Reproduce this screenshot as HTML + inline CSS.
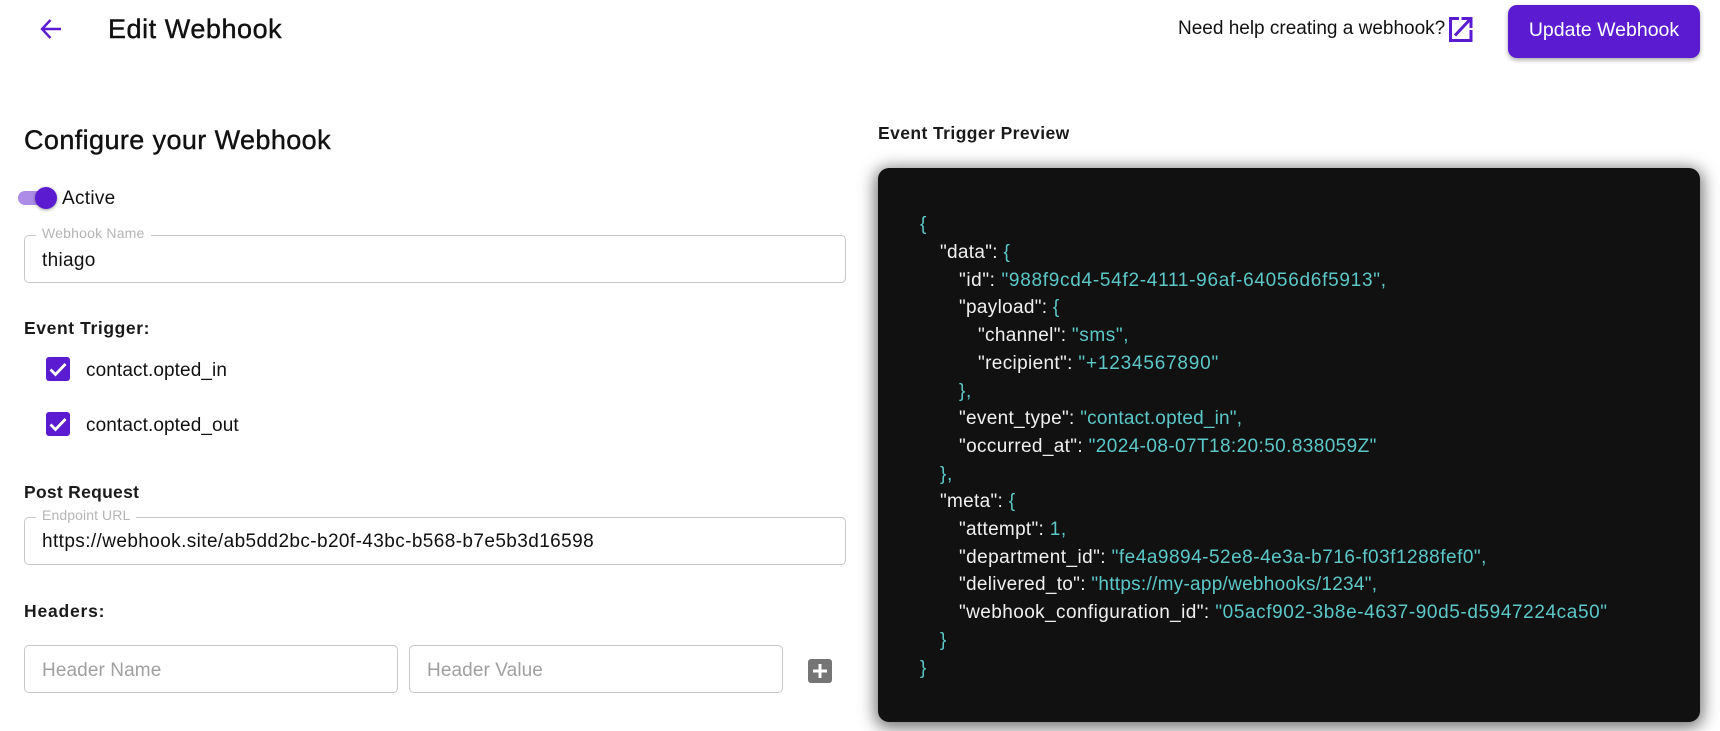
<!DOCTYPE html>
<html><head><meta charset="utf-8"><style>
html,body{margin:0;padding:0;background:#fff}
body{width:1720px;height:731px;position:relative;overflow:hidden;font-family:"Liberation Sans",sans-serif;color:#111}
.t{position:absolute;white-space:nowrap}
.box{position:absolute;border:1.5px solid #c8c8c8;border-radius:5px;box-sizing:border-box;background:#fff}
.leg{position:absolute;background:#fff;padding:0 6px;color:#b5b5b5;font-size:14px;white-space:nowrap;line-height:14px}
.ph{color:#a0a0a0;font-size:19px;letter-spacing:.1px}
.b{font-weight:bold;font-size:17.5px;color:#1a1a1a}
.card{position:absolute;left:878px;top:168px;width:822px;height:554px;background:#111;border-radius:11px;box-shadow:0 3px 16px 3px rgba(0,0,0,.55)}
.c{position:absolute;left:0;white-space:pre;font-size:19px;line-height:20px;color:#f0f0f0;letter-spacing:.3px}
.c i{font-style:normal;color:#5cc8c8;letter-spacing:.6px}
.cb{position:absolute;left:46px;width:24px;height:24px;background:#5a1bd1;border-radius:3px}
</style></head><body>
<svg style="position:absolute;left:38px;top:17px" width="26" height="24" viewBox="0 0 26 24" fill="none" stroke="#5a1bd1" stroke-width="2.4"><path d="M23 12H5M12.500 3L4 12l8.500 9"/></svg>
<div class="t" style="left:108px;top:13px;font-size:27px;letter-spacing:.55px;line-height:32px;-webkit-text-stroke:.4px #111">Edit Webhook</div>
<div class="t" style="left:1178px;top:17px;font-size:19px;line-height:24px">Need help creating a webhook?</div>
<svg style="position:absolute;left:1447px;top:15px" width="26" height="28" viewBox="0 0 26 28" fill="none" stroke="#5a1bd1" stroke-width="3"><path d="M12 3.500H3.500v22H24V15M8 20.500L22.500 5M14.500 3.500H24V13"/></svg>
<div style="position:absolute;left:1508px;top:5px;width:192px;height:53px;background:#5a1bd1;border-radius:9px;box-shadow:0 2px 5px rgba(0,0,0,.35);color:#fff;font-size:19.500px;line-height:51px;text-align:center">Update Webhook</div>

<div class="t" style="left:24px;top:123px;font-size:27px;letter-spacing:.4px;line-height:34px;-webkit-text-stroke:.4px #111">Configure your Webhook</div>
<div style="position:absolute;left:18px;top:191px;width:36px;height:14px;border-radius:7px;background:#ad8ce8"></div>
<div style="position:absolute;left:35px;top:187px;width:22px;height:22px;border-radius:50%;background:#5a1bd1;box-shadow:0 1px 3px rgba(0,0,0,.4)"></div>
<div class="t" style="left:62px;top:187px;font-size:19px;letter-spacing:.3px;line-height:24px">Active</div>

<div class="box" style="left:24px;top:235px;width:822px;height:48px"></div>
<div class="leg" style="left:36px;top:226px;letter-spacing:.2px">Webhook Name</div>
<div class="t" style="left:42px;top:249px;font-size:19px;letter-spacing:.3px;line-height:24px">thiago</div>

<div class="t b" style="left:24px;top:317px;line-height:22px;letter-spacing:.6px">Event Trigger:</div>
<div class="cb" style="top:357px"><svg width="24" height="24" viewBox="0 0 24 24" fill="none" stroke="#fff" stroke-width="2.800"><path d="M4.500 12.500l5 5L19.500 7"/></svg></div>
<div class="t" style="left:86px;top:359px;font-size:19px;letter-spacing:.1px;line-height:24px">contact.opted_in</div>
<div class="cb" style="top:412px"><svg width="24" height="24" viewBox="0 0 24 24" fill="none" stroke="#fff" stroke-width="2.800"><path d="M4.500 12.500l5 5L19.500 7"/></svg></div>
<div class="t" style="left:86px;top:414px;font-size:19px;letter-spacing:.1px;line-height:24px">contact.opted_out</div>

<div class="t b" style="left:24px;top:481px;line-height:22px;letter-spacing:.28px">Post Request</div>
<div class="box" style="left:24px;top:517px;width:822px;height:48px"></div>
<div class="leg" style="left:36px;top:508px;letter-spacing:.1px">Endpoint URL</div>
<div class="t" style="left:42px;top:530px;font-size:19px;letter-spacing:.4px;line-height:24px">https://webhook.site/ab5dd2bc-b20f-43bc-b568-b7e5b3d16598</div>

<div class="t b" style="left:24px;top:600px;line-height:22px;letter-spacing:.8px">Headers:</div>
<div class="box" style="left:24px;top:645px;width:374px;height:48px"></div>
<div class="t ph" style="left:42px;top:659px;line-height:24px">Header Name</div>
<div class="box" style="left:409px;top:645px;width:374px;height:48px"></div>
<div class="t ph" style="left:427px;top:659px;line-height:24px">Header Value</div>
<div style="position:absolute;left:808px;top:659px;width:24px;height:24px;background:#757575;border-radius:3px"><svg width="24" height="24" viewBox="0 0 24 24" fill="none" stroke="#fff" stroke-width="3"><path d="M5 12h14M12 5v14"/></svg></div>

<div class="t" style="left:878px;top:122px;font-weight:bold;font-size:17.500px;letter-spacing:.42px;line-height:22px;color:#1a1a1a">Event Trigger Preview</div>
<div class="card">
<div class="c" style="top:47px;left:42px"><i>{</i></div>
<div class="c" style="top:75px;left:62px">"data": <i>{</i></div>
<div class="c" style="top:103px;left:81px;letter-spacing:.6px">"id": <i style="letter-spacing:.72px">"988f9cd4-54f2-4111-96af-64056d6f5913",</i></div>
<div class="c" style="top:130px;left:81px">"payload": <i>{</i></div>
<div class="c" style="top:158px;left:100px">"channel": <i>"sms",</i></div>
<div class="c" style="top:186px;left:100px;letter-spacing:.35px">"recipient": <i style="letter-spacing:.8px">"+1234567890"</i></div>
<div class="c" style="top:214px;left:81px"><i>},</i></div>
<div class="c" style="top:241px;left:81px">"event_type": <i style="letter-spacing:.2px">"contact.opted_in",</i></div>
<div class="c" style="top:269px;left:81px;letter-spacing:.35px">"occurred_at": <i style="letter-spacing:.4px">"2024-08-07T18:20:50.838059Z"</i></div>
<div class="c" style="top:297px;left:62px"><i>},</i></div>
<div class="c" style="top:324px;left:62px">"meta": <i>{</i></div>
<div class="c" style="top:352px;left:81px">"attempt": <i>1,</i></div>
<div class="c" style="top:380px;left:81px;letter-spacing:.42px">"department_id": <i style="letter-spacing:.5px">"fe4a9894-52e8-4e3a-b716-f03f1288fef0",</i></div>
<div class="c" style="top:407px;left:81px">"delivered_to": <i style="letter-spacing:.27px">"https://my-app/webhooks/1234",</i></div>
<div class="c" style="top:435px;left:81px;letter-spacing:.41px">"webhook_configuration_id": <i>"05acf902-3b8e-4637-90d5-d5947224ca50"</i></div>
<div class="c" style="top:463px;left:62px"><i>}</i></div>
<div class="c" style="top:491px;left:42px"><i>}</i></div>
</div>
</body></html>
